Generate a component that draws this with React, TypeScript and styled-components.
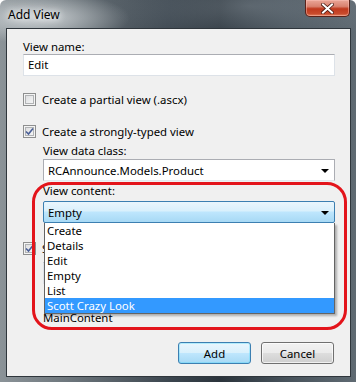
import styled, { createGlobalStyle, css } from 'styled-components';

const GlobalStyle = createGlobalStyle`
  html, body {
    margin: 0;
    padding: 0;
    background: #ffffff;
  }
  body {
    font-family: "Noto Sans", "Open Sans", sans-serif;
    font-size: 11.4px;
  }
`;

const Window = styled.div`
  width: 356px;
  height: 382px;
  box-sizing: border-box;
  display: flex;
  flex-direction: column;
  padding: 0 5px 5px 6px;
  border-radius: 6px 6px 0 0;
  overflow: hidden;
  background:
    radial-gradient(ellipse 90px 26px at 40px 18px, rgba(230, 234, 236, 0.75), rgba(230, 234, 236, 0) 100%),
    radial-gradient(ellipse 140px 40px at 250px 6px, rgba(140, 150, 158, 0.45), rgba(140, 150, 158, 0) 100%),
    linear-gradient(90deg, #8b9398 0%, #6f787e 18%, #3b454e 48%, #2b343c 62%, #46515a 80%, #5f6a72 100%);
`;

const TitleBar = styled.div`
  height: 28px;
  flex: none;
  display: flex;
  align-items: flex-start;
  justify-content: space-between;
`;

const Title = styled.div`
  padding: 6px 0 0 2px;
  font-size: 12px;
  color: #000;
  text-shadow: 0 0 6px rgba(255, 255, 255, 0.95), 0 0 10px rgba(255, 255, 255, 0.8);
`;

const CloseButton = styled.div`
  width: 45px;
  height: 17px;
  margin-right: 1px;
  box-sizing: border-box;
  display: flex;
  align-items: center;
  justify-content: center;
  border: 1px solid #5a2219;
  border-top: none;
  border-radius: 0 0 5px 5px;
  background: linear-gradient(180deg, #eaa697 0%, #d9826f 40%, #c0391d 55%, #c84a2c 85%, #e2805e 100%);
  box-shadow: inset 0 0 0 1px rgba(255, 200, 190, 0.45);
`;

const Client = styled.div`
  flex: 1;
  position: relative;
  box-sizing: border-box;
  border: 1px solid #2f363c;
  background: #f0f0f0;
  padding: 10px 15px 0 16px;
  display: flex;
  flex-direction: column;
  color: #000;
`;

const Label = styled.div<{ $gap?: number }>`
  height: 15px;
  line-height: 15px;
  margin-top: ${p => p.$gap ?? 0}px;
  white-space: nowrap;
`;

const TextBox = styled.div<{ $gap?: number }>`
  height: 22px;
  box-sizing: border-box;
  margin-top: ${p => p.$gap ?? 0}px;
  border: 1px solid #dde2e8;
  border-top-color: #abadb3;
  background: #fff;
  padding: 0 4px;
  line-height: 20px;
`;

const CheckRow = styled.div<{ $gap: number }>`
  display: flex;
  align-items: center;
  gap: 6px;
  height: 15px;
  margin-top: ${p => p.$gap}px;
  white-space: nowrap;
`;

const Box = styled.span`
  width: 13px;
  height: 13px;
  flex: none;
  box-sizing: border-box;
  border: 1px solid #8e8f8f;
  background: #f4f4f4;
  box-shadow: inset 0 0 0 1px #f4f4f4, inset 0 0 0 2px #b1b3b5;
  background-image: linear-gradient(135deg, #d8d9db, #fbfbfb);
  display: flex;
  align-items: center;
  justify-content: center;
`;

const Indent = styled.div`
  padding-left: 20px;
  display: flex;
  flex-direction: column;
`;

const ComboWrap = styled.div<{ $gap: number }>`
  position: relative;
  margin-top: ${p => p.$gap}px;
`;

const Combo = styled.div<{ $hot?: boolean }>`
  height: 22px;
  box-sizing: border-box;
  display: flex;
  align-items: center;
  justify-content: space-between;
  padding: 0 5px 0 4px;
  border: 1px solid #abadb3;
  border-bottom-color: #e3e9ef;
  background: #fff;
  ${p => p.$hot && css`
    border: 1px solid #3c7fb1;
    border-radius: 2px;
    background: linear-gradient(180deg, #eaf6fd 0%, #d9f0fc 45%, #bee6fd 50%, #a7d9f5 100%);
  `}
`;

const Arrow = styled.span`
  width: 0;
  height: 0;
  border-left: 4px solid transparent;
  border-right: 4px solid transparent;
  border-top: 4px solid #000;
  margin-top: 1px;
`;

const DropList = styled.div`
  position: absolute;
  top: 100%;
  left: 1px;
  width: 291px;
  box-sizing: border-box;
  border: 1px solid #646464;
  border-top: none;
  background: #fff;
  box-shadow: 2px 2px 2px rgba(0, 0, 0, 0.28);
  z-index: 2;
`;

const ListItem = styled.div<{ $selected?: boolean }>`
  height: 15px;
  line-height: 15px;
  padding-left: 2px;
  white-space: nowrap;
  ${p => p.$selected && css`
    background: #3399ff;
    color: #fff;
  `}
`;

const Ring = styled.div`
  position: absolute;
  left: 25px;
  top: 153px;
  width: 315px;
  height: 148px;
  box-sizing: border-box;
  border: 3px solid #e3141b;
  border-radius: 20px;
  pointer-events: none;
  z-index: 3;
`;

const ButtonRow = styled.div`
  display: flex;
  justify-content: flex-end;
  gap: 10px;
  margin-top: 17px;
  padding-right: 1px;
`;

const Button = styled.div<{ $default?: boolean }>`
  width: 73px;
  height: 22px;
  box-sizing: border-box;
  display: flex;
  align-items: center;
  justify-content: center;
  border: 1px solid #707070;
  border-radius: 3px;
  background: linear-gradient(180deg, #f2f2f2 0%, #ebebeb 48%, #dddddd 52%, #cfcfcf 100%);
  box-shadow: inset 0 0 0 1px rgba(255, 255, 255, 0.7);
  ${p => p.$default && css`
    border-color: #3c7fb1;
    background: linear-gradient(180deg, #eaf6fd 0%, #d9f0fc 48%, #bee6fd 52%, #a7d9f5 100%);
    box-shadow: inset 0 0 0 1px #48d8fb55;
  `}
`;

function Check({ checked }: { checked?: boolean }) {
  return (
    <Box>
      {checked && (
        <svg width="9" height="9" viewBox="0 0 9 9">
          <path d="M1 4.5 L3.5 7 L8 1.5" fill="none" stroke="#4a5f97" strokeWidth="1.6" />
        </svg>
      )}
    </Box>
  );
}

const contentOptions = ['Create', 'Details', 'Edit', 'Empty', 'List', 'Scott Crazy Look'];

function App() {
  return (
    <>
      <GlobalStyle />
      <Window>
        <TitleBar>
          <Title>Add View</Title>
          <CloseButton>
            <svg width="13" height="11" viewBox="0 0 13 11">
              <path d="M2 1.5 L11 9.5 M11 1.5 L2 9.5" stroke="#4a1a12" strokeWidth="3.6" strokeLinecap="square" />
              <path d="M2 1.5 L11 9.5 M11 1.5 L2 9.5" stroke="#ffffff" strokeWidth="2" strokeLinecap="square" />
            </svg>
          </CloseButton>
        </TitleBar>
        <Client>
          <Label>View name:</Label>
          <TextBox>Edit</TextBox>
          <CheckRow $gap={16}>
            <Check />
            Create a partial view (.ascx)
          </CheckRow>
          <CheckRow $gap={17}>
            <Check checked />
            Create a strongly-typed view
          </CheckRow>
          <Indent>
            <Label $gap={4}>View data class:</Label>
            <ComboWrap $gap={1}>
              <Combo>
                RCAnnounce.Models.Product
                <Arrow />
              </Combo>
            </ComboWrap>
            <Label $gap={2}>View content:</Label>
            <ComboWrap $gap={3}>
              <Combo $hot>
                Empty
                <Arrow />
              </Combo>
              <DropList>
                {contentOptions.map(o => (
                  <ListItem key={o} $selected={o === 'Scott Crazy Look'}>{o}</ListItem>
                ))}
              </DropList>
            </ComboWrap>
          </Indent>
          <CheckRow $gap={18}>
            <Check checked />
            S
          </CheckRow>
          <Indent>
            <TextBox $gap={6} />
            <Label $gap={26}>MainContent</Label>
          </Indent>
          <ButtonRow>
            <Button $default>Add</Button>
            <Button>Cancel</Button>
          </ButtonRow>
          <Ring />
        </Client>
      </Window>
    </>
  );
}

export default App;
